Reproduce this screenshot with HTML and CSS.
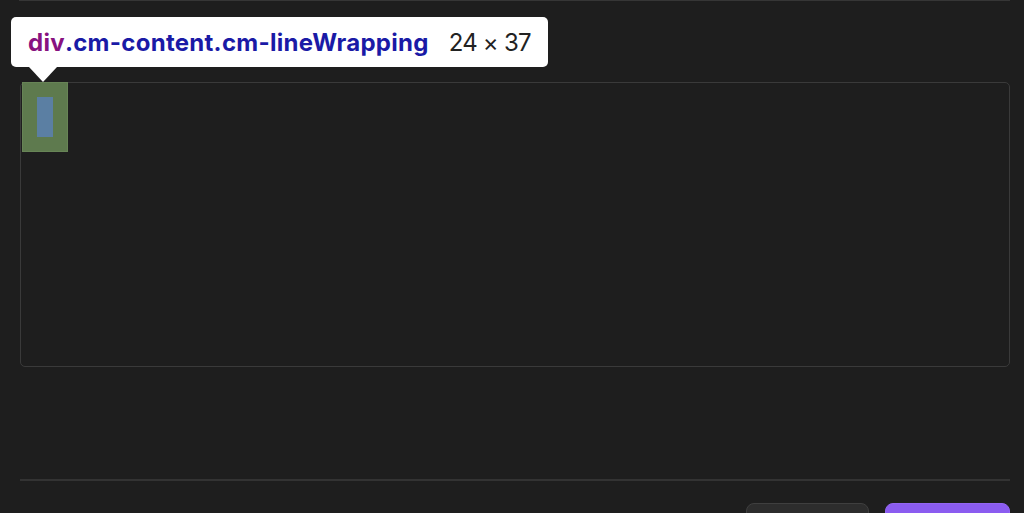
FILE: index.html
```html
<!DOCTYPE html>
<html>
<head>
<meta charset="utf-8">
<link rel="stylesheet" href="styles.css">
</head>
<body>
<div class="modal">
  <div class="top-rule"></div>
  <div class="editor">
    <div class="cm-content"></div>
  </div>
  <div class="footer">
    <button class="btn btn-secondary"></button>
    <button class="btn btn-primary"></button>
  </div>
</div>
<div class="hl-margin"><div class="hl-content"></div></div>
<div class="tooltip">
  <span class="tt-tag">div</span><span class="tt-cls">.cm-content.cm-lineWrapping</span>
  <span class="tt-size">24 × 37</span>
  <div class="tt-arrow"></div>
</div>
</body>
</html>
```
FILE: styles.css
```css
html, body {
  margin: 0;
  padding: 0;
  background: #1e1e1e;
  width: 1024px;
  height: 513px;
  overflow: hidden;
  font-family: Inter, "Noto Sans", sans-serif;
}
.modal {
  padding: 0 14px 0 20px;
  display: flex;
  flex-direction: column;
}
.top-rule {
  height: 1px;
  background: #363636;
  margin-left: -1px;
}
.editor {
  margin-top: 81px;
  height: 283px;
  border: 1px solid #3a3a3a;
  border-radius: 5px;
  padding: 0 2px;
}
.footer {
  margin-top: 112px;
  border-top: 2px solid #333333;
  padding-top: 22px;
  display: flex;
  justify-content: flex-end;
  gap: 16px;
}
.btn {
  height: 40px;
  border-radius: 8px;
  border: 1px solid transparent;
  padding: 0;
}
.btn-secondary {
  width: 123px;
  background: #2d2d2d;
  border-color: #3f3f3f;
}
.btn-primary {
  width: 125px;
  background: #8b5cf0;
  border-color: #9366f2;
}
.hl-margin {
  position: absolute;
  left: 22px;
  top: 82px;
  width: 44px;
  height: 68px;
  background: #5e7a4e;
  border: 1px solid #678456;
}
.hl-content {
  position: absolute;
  left: 14px;
  top: 14px;
  width: 16px;
  height: 40px;
  background: #5b7fa3;
}
.tooltip {
  position: absolute;
  left: 11px;
  top: 17px;
  width: 537px;
  height: 50px;
  box-sizing: border-box;
  background: #ffffff;
  border-radius: 5px;
  padding: 0 0 0 17px;
  display: flex;
  align-items: center;
  font-size: 24px;
  white-space: nowrap;
}
.tt-tag {
  color: #881280;
  font-weight: 700;
  letter-spacing: 0.28px;
}
.tt-cls {
  color: #1a1aa6;
  font-weight: 700;
  letter-spacing: 0.28px;
}
.tt-size {
  color: #222222;
  margin-left: 20px;
  font-weight: 400;
  letter-spacing: -0.8px;
}
.tt-arrow {
  position: absolute;
  left: 18px;
  top: 50px;
  width: 0;
  height: 0;
  border-left: 14px solid transparent;
  border-right: 14px solid transparent;
  border-top: 15px solid #ffffff;
}
```
